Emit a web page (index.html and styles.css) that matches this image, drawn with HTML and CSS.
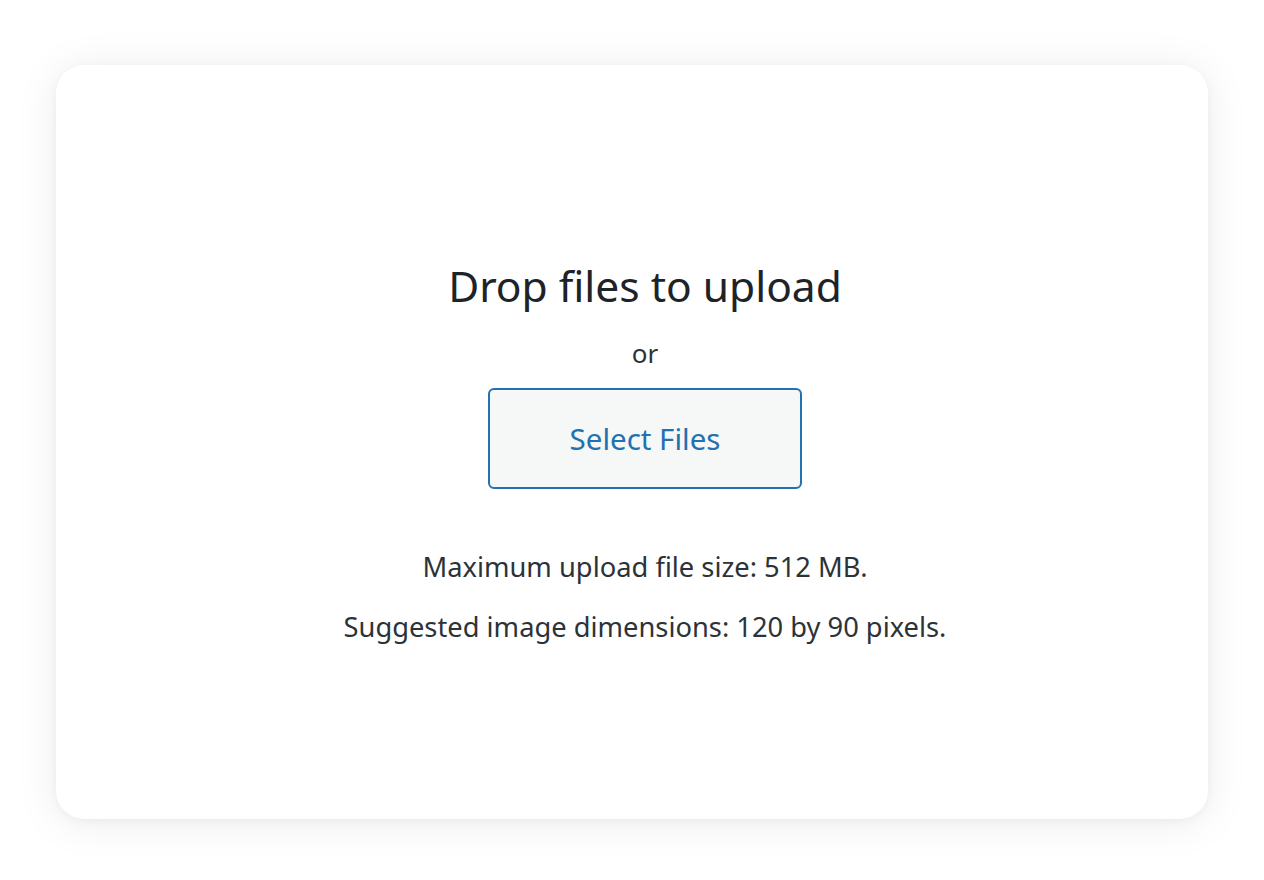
FILE: index.html
```html
<!DOCTYPE html>
<html>
<head>
<meta charset="utf-8">
<link rel="stylesheet" href="styles.css">
</head>
<body>
<div class="stage">
  <div class="card">
    <div class="inner">
      <h2 class="title">Drop files to upload</h2>
      <p class="or">or</p>
      <button class="select">Select Files</button>
      <p class="info first">Maximum upload file size: 512 MB.</p>
      <p class="info second">Suggested image dimensions: 120 by 90 pixels.</p>
    </div>
  </div>
</div>
</body>
</html>
```
FILE: styles.css
```css
html, body {
  margin: 0;
  padding: 0;
  background: #ffffff;
}
body {
  font-family: "Noto Sans", "Open Sans", sans-serif;
  color: #1d2327;
}
.stage {
  width: 1264px;
  height: 880px;
  padding: 65px 56px 61px 56px;
  box-sizing: border-box;
}
.card {
  height: 754px;
  box-sizing: border-box;
  padding-top: 193px;
  background: #ffffff;
  border-radius: 28px;
  box-shadow: 0 4px 44px rgba(0,0,0,0.08), 0 2px 10px rgba(0,0,0,0.045);
}
.inner {
  display: flex;
  flex-direction: column;
  align-items: center;
  padding-left: 26px;
}
.title {
  margin: 0;
  font-weight: 400;
  font-size: 42.5px;
  line-height: 56px;
  color: #1d2327;
}
.or {
  margin: 21px 0 0 0;
  font-size: 26px;
  line-height: 36px;
  color: #2c3338;
}
.select {
  margin-top: 17px;
  width: 314px;
  height: 101px;
  box-sizing: border-box;
  border: 2px solid #2271b1;
  border-radius: 6px;
  background: #f6f7f7;
  color: #2271b1;
  font-family: "Noto Sans", "Open Sans", sans-serif;
  font-size: 29.5px;
  padding: 0;
}
.info {
  margin: 0;
  font-size: 27.3px;
  line-height: 36px;
  color: #2c3338;
}
.info.first {
  margin-top: 60px;
}
.info.second {
  margin-top: 24px;
}
```
